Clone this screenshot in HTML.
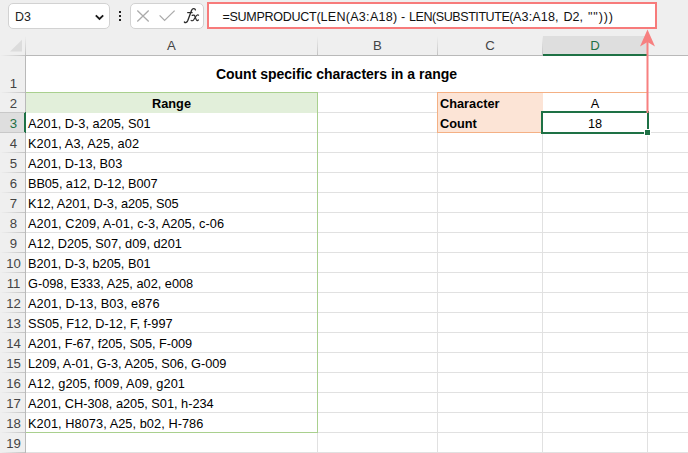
<!DOCTYPE html>
<html><head><meta charset="utf-8"><style>
*{margin:0;padding:0;box-sizing:border-box}
html,body{width:688px;height:453px;overflow:hidden;background:#efefef;font-family:"Liberation Sans",sans-serif;}
.a{position:absolute}
.t{position:absolute;white-space:pre;font-size:12.75px;line-height:21px;color:#000}
.b{font-weight:bold}
.rh{position:absolute;left:1px;width:25px;text-align:center;font-size:13.2px;line-height:22px;color:#444}
.ch{position:absolute;top:36px;height:19px;text-align:center;font-size:13.2px;line-height:20px;color:#444}
.hl{position:absolute;height:1px;background:#e1e1e1}
.vl{position:absolute;width:1px;background:#e1e1e1}
</style></head><body>

<div class="a" style="left:8px;top:3px;width:102px;height:26px;background:#fff;border:1px solid #d2d2d2;border-radius:5px"></div>
<div class="t" style="left:15px;top:7px;color:#222;font-size:12.4px">D3</div>
<svg class="a" style="left:0;top:0" width="688" height="36"><path d="M95.8 15.3 L99.5 19 L103.2 15.3" fill="none" stroke="#1a1a1a" stroke-width="1.8"/><rect x="119" y="11" width="2" height="2" fill="#222"/><rect x="119" y="15" width="2" height="2" fill="#222"/><rect x="119" y="19" width="2" height="2" fill="#222"/></svg>
<div class="a" style="left:130px;top:3px;width:74px;height:26px;background:#fff;border:1px solid #d2d2d2;border-radius:5px"></div>
<svg class="a" style="left:0;top:0" width="688" height="36"><path d="M137.3 10.5 L148.7 21.5 M148.7 10.5 L137.3 21.5" fill="none" stroke="#ababab" stroke-width="1.3"/><path d="M159.6 15.4 L164.6 20.4 L174.6 10.6" fill="none" stroke="#ababab" stroke-width="1.3"/></svg>
<svg class="a" style="left:0;top:0" width="688" height="36"><path d="M195.4 9.8 C195 8.2 192.6 8.2 191.6 10.2 L187.8 20.4 C187 22.4 185.4 23.2 184.4 22" fill="none" stroke="#2a2a2a" stroke-width="1.35" stroke-linecap="round"/><path d="M187.2 12.6 L192.6 12.6" fill="none" stroke="#2a2a2a" stroke-width="1.2"/><path d="M192.2 15.4 C193.6 14.6 194.6 15.2 195.1 16.6 L196.1 19.4 C196.6 20.8 197.6 21 198.4 19.9" fill="none" stroke="#2a2a2a" stroke-width="1.25" stroke-linecap="round"/><path d="M198.6 15.2 C197.8 14.6 196.9 15 196 16.2 L193.8 19.6 C192.8 20.9 191.8 21.1 191.1 20.4" fill="none" stroke="#2a2a2a" stroke-width="1.1" stroke-linecap="round"/></svg>
<div class="a" style="left:207px;top:2px;width:450px;height:27px;background:#fff;border:2px solid #f77b7b"></div>
<div class="t" style="left:222.5px;top:7px;font-size:12.55px;letter-spacing:-0.3px;color:#111">=SUMPRODUCT(</div>
<div class="t" style="left:320.5px;top:7px;font-size:12.55px;letter-spacing:0.28px;color:#111">LEN(A3:A18)</div>
<div class="t" style="left:401px;top:7px;font-size:12.55px;letter-spacing:0px;color:#111">-</div>
<div class="t" style="left:409px;top:7px;font-size:12.55px;letter-spacing:-0.45px;color:#111">LEN(SUBSTITUTE(</div>
<div class="t" style="left:513px;top:7px;font-size:12.55px;letter-spacing:0.15px;color:#111">A3:A18,</div>
<div class="t" style="left:563.5px;top:7px;font-size:12.55px;letter-spacing:0px;color:#111">D2,</div>
<div class="t" style="left:588px;top:7px;font-size:12.55px;letter-spacing:0.9px;color:#111">&quot;&quot;)))</div>
<div class="a" style="left:26px;top:56px;width:662px;height:397px;background:#fff"></div>
<div class="a" style="left:26px;top:55px;width:662px;height:1px;background:#b9b9b9"></div>
<div class="a" style="left:0;top:55px;width:25px;height:1px;background:linear-gradient(to right,rgba(190,190,190,0),#c4c4c4)"></div>
<div class="a" style="left:25px;top:55px;width:1px;height:398px;background:#b9b9b9"></div>
<div class="a" style="left:25px;top:36px;width:1px;height:19px;background:linear-gradient(to bottom,rgba(190,190,190,0),#c4c4c4)"></div>
<svg class="a" style="left:0;top:36px" width="25" height="19"><path d="M10 15.6 L22 3.7 L22 15.6 Z" fill="#dcdcdc"/></svg>
<div class="a" style="left:317px;top:36px;width:1px;height:19px;background:linear-gradient(to bottom,rgba(185,185,185,0),#c4c4c4)"></div>
<div class="a" style="left:437px;top:36px;width:1px;height:19px;background:linear-gradient(to bottom,rgba(185,185,185,0),#c4c4c4)"></div>
<div class="a" style="left:542px;top:36px;width:1px;height:19px;background:linear-gradient(to bottom,rgba(185,185,185,0),#c4c4c4)"></div>
<div class="a" style="left:647px;top:36px;width:1px;height:19px;background:linear-gradient(to bottom,rgba(185,185,185,0),#c4c4c4)"></div>
<div class="a" style="left:543px;top:36px;width:104px;height:19px;background:#dedede"></div>
<div class="a" style="left:543px;top:54px;width:104px;height:2px;background:#1e7145"></div>
<div class="ch" style="left:26px;width:291px;color:#444">A</div>
<div class="ch" style="left:318px;width:119px;color:#444">B</div>
<div class="ch" style="left:438px;width:104px;color:#444">C</div>
<div class="ch" style="left:543px;width:104px;color:#1e7145">D</div>
<div class="rh" style="top:73px">1</div>
<div class="rh" style="top:93px;color:#444">2</div>
<div class="a" style="left:0;top:113px;width:25px;height:19px;background:#dedede"></div>
<div class="a" style="left:24px;top:112px;width:2px;height:21px;background:#1e7145"></div>
<div class="rh" style="top:113px;color:#1e7145">3</div>
<div class="rh" style="top:133px;color:#444">4</div>
<div class="rh" style="top:153px;color:#444">5</div>
<div class="rh" style="top:173px;color:#444">6</div>
<div class="rh" style="top:193px;color:#444">7</div>
<div class="rh" style="top:213px;color:#444">8</div>
<div class="rh" style="top:233px;color:#444">9</div>
<div class="rh" style="top:253px;color:#444">10</div>
<div class="rh" style="top:273px;color:#444">11</div>
<div class="rh" style="top:293px;color:#444">12</div>
<div class="rh" style="top:313px;color:#444">13</div>
<div class="rh" style="top:333px;color:#444">14</div>
<div class="rh" style="top:353px;color:#444">15</div>
<div class="rh" style="top:373px;color:#444">16</div>
<div class="rh" style="top:393px;color:#444">17</div>
<div class="rh" style="top:413px;color:#444">18</div>
<div class="rh" style="top:433px;color:#444">19</div>
<div class="a" style="left:0;top:92px;width:25px;height:1px;background:linear-gradient(to right,rgba(200,200,200,0),#c4c4c4)"></div>
<div class="a" style="left:0;top:112px;width:25px;height:1px;background:linear-gradient(to right,rgba(200,200,200,0),#c4c4c4)"></div>
<div class="a" style="left:0;top:132px;width:25px;height:1px;background:linear-gradient(to right,rgba(200,200,200,0),#c4c4c4)"></div>
<div class="a" style="left:0;top:152px;width:25px;height:1px;background:linear-gradient(to right,rgba(200,200,200,0),#c4c4c4)"></div>
<div class="a" style="left:0;top:172px;width:25px;height:1px;background:linear-gradient(to right,rgba(200,200,200,0),#c4c4c4)"></div>
<div class="a" style="left:0;top:192px;width:25px;height:1px;background:linear-gradient(to right,rgba(200,200,200,0),#c4c4c4)"></div>
<div class="a" style="left:0;top:212px;width:25px;height:1px;background:linear-gradient(to right,rgba(200,200,200,0),#c4c4c4)"></div>
<div class="a" style="left:0;top:232px;width:25px;height:1px;background:linear-gradient(to right,rgba(200,200,200,0),#c4c4c4)"></div>
<div class="a" style="left:0;top:252px;width:25px;height:1px;background:linear-gradient(to right,rgba(200,200,200,0),#c4c4c4)"></div>
<div class="a" style="left:0;top:272px;width:25px;height:1px;background:linear-gradient(to right,rgba(200,200,200,0),#c4c4c4)"></div>
<div class="a" style="left:0;top:292px;width:25px;height:1px;background:linear-gradient(to right,rgba(200,200,200,0),#c4c4c4)"></div>
<div class="a" style="left:0;top:312px;width:25px;height:1px;background:linear-gradient(to right,rgba(200,200,200,0),#c4c4c4)"></div>
<div class="a" style="left:0;top:332px;width:25px;height:1px;background:linear-gradient(to right,rgba(200,200,200,0),#c4c4c4)"></div>
<div class="a" style="left:0;top:352px;width:25px;height:1px;background:linear-gradient(to right,rgba(200,200,200,0),#c4c4c4)"></div>
<div class="a" style="left:0;top:372px;width:25px;height:1px;background:linear-gradient(to right,rgba(200,200,200,0),#c4c4c4)"></div>
<div class="a" style="left:0;top:392px;width:25px;height:1px;background:linear-gradient(to right,rgba(200,200,200,0),#c4c4c4)"></div>
<div class="a" style="left:0;top:412px;width:25px;height:1px;background:linear-gradient(to right,rgba(200,200,200,0),#c4c4c4)"></div>
<div class="a" style="left:0;top:432px;width:25px;height:1px;background:linear-gradient(to right,rgba(200,200,200,0),#c4c4c4)"></div>
<div class="a" style="left:0;top:452px;width:25px;height:1px;background:linear-gradient(to right,rgba(200,200,200,0),#c4c4c4)"></div>
<div class="a" style="left:0;top:112px;width:24px;height:1px;background:#c8c8c8"></div>
<div class="a" style="left:0;top:132px;width:24px;height:1px;background:#c8c8c8"></div>
<div class="hl" style="left:26px;top:92px;width:662px"></div>
<div class="hl" style="left:26px;top:112px;width:662px"></div>
<div class="hl" style="left:26px;top:132px;width:662px"></div>
<div class="hl" style="left:26px;top:152px;width:662px"></div>
<div class="hl" style="left:26px;top:172px;width:662px"></div>
<div class="hl" style="left:26px;top:192px;width:662px"></div>
<div class="hl" style="left:26px;top:212px;width:662px"></div>
<div class="hl" style="left:26px;top:232px;width:662px"></div>
<div class="hl" style="left:26px;top:252px;width:662px"></div>
<div class="hl" style="left:26px;top:272px;width:662px"></div>
<div class="hl" style="left:26px;top:292px;width:662px"></div>
<div class="hl" style="left:26px;top:312px;width:662px"></div>
<div class="hl" style="left:26px;top:332px;width:662px"></div>
<div class="hl" style="left:26px;top:352px;width:662px"></div>
<div class="hl" style="left:26px;top:372px;width:662px"></div>
<div class="hl" style="left:26px;top:392px;width:662px"></div>
<div class="hl" style="left:26px;top:412px;width:662px"></div>
<div class="hl" style="left:26px;top:432px;width:662px"></div>
<div class="hl" style="left:26px;top:452px;width:662px"></div>
<div class="vl" style="left:317px;top:56px;height:397px"></div>
<div class="vl" style="left:437px;top:56px;height:397px"></div>
<div class="vl" style="left:542px;top:56px;height:397px"></div>
<div class="vl" style="left:647px;top:56px;height:397px"></div>
<div class="a" style="left:26px;top:56px;width:621px;height:36px;background:#fff"></div>
<div class="t b" style="left:26px;top:64px;width:621px;text-align:center;font-size:14px">Count specific characters in a range</div>
<div class="a" style="left:26px;top:93px;width:291px;height:20px;background:#e2efda"></div>
<div class="t b" style="left:26px;top:93px;width:291px;text-align:center">Range</div>
<div class="a" style="left:26px;top:92px;width:292px;height:341px;border:1px solid #a9d08e;border-left:none"></div>
<div class="t" style="left:28px;top:113px;letter-spacing:0.000px">A201, D-3, a205, S01</div>
<div class="t" style="left:28px;top:133px;letter-spacing:0.106px">K201, A3, A25, a02</div>
<div class="t" style="left:28px;top:153px;letter-spacing:0.000px">A201, D-13, B03</div>
<div class="t" style="left:28px;top:173px;letter-spacing:-0.075px">BB05, a12, D-12, B007</div>
<div class="t" style="left:28px;top:193px;letter-spacing:-0.042px">K12, A201, D-3, a205, S05</div>
<div class="t" style="left:28px;top:213px;letter-spacing:0.081px">A201, C209, A-01, c-3, A205, c-06</div>
<div class="t" style="left:28px;top:233px;letter-spacing:0.000px">A12, D205, S07, d09, d201</div>
<div class="t" style="left:28px;top:253px;letter-spacing:0.000px">B201, D-3, b205, B01</div>
<div class="t" style="left:28px;top:273px;letter-spacing:0.000px">G-098, E333, A25, a02, e008</div>
<div class="t" style="left:28px;top:293px;letter-spacing:0.095px">A201, D-13, B03, e876</div>
<div class="t" style="left:28px;top:313px;letter-spacing:0.000px">SS05, F12, D-12, F, f-997</div>
<div class="t" style="left:28px;top:333px;letter-spacing:-0.037px">A201, F-67, f205, S05, F-009</div>
<div class="t" style="left:28px;top:353px;letter-spacing:0.000px">L209, A-01, G-3, A205, S06, G-009</div>
<div class="t" style="left:28px;top:373px;letter-spacing:0.096px">A12, g205, f009, A09, g201</div>
<div class="t" style="left:28px;top:393px;letter-spacing:0.000px">A201, CH-308, a205, S01, h-234</div>
<div class="t" style="left:28px;top:413px;letter-spacing:0.063px">K201, H8073, A25, b02, H-786</div>
<div class="a" style="left:438px;top:93px;width:105px;height:40px;background:#fce4d6"></div>
<div class="a" style="left:437px;top:92px;width:211px;height:41px;border:1px solid #f4b084"></div>
<div class="t b" style="left:440px;top:93px">Character</div>
<div class="t b" style="left:440px;top:113px">Count</div>
<div class="t" style="left:543px;top:93px;width:104px;text-align:center">A</div>
<div class="a" style="left:541px;top:111px;width:108px;height:23px;border:2px solid #1e7145"></div>
<div class="t" style="left:543px;top:113px;width:104px;text-align:center">18</div>
<div class="a" style="left:644px;top:129px;width:7px;height:7px;background:#fff"></div>
<div class="a" style="left:645px;top:130px;width:5px;height:5px;background:#1e7145"></div>
<svg class="a" style="left:0;top:0" width="688" height="453"><rect x="646.5" y="40" width="2" height="73" fill="#f78080"/><path d="M647.5 29.5 L655 46.5 L647.5 42 L640 46.5 Z" fill="#f78080"/></svg>
</body></html>
